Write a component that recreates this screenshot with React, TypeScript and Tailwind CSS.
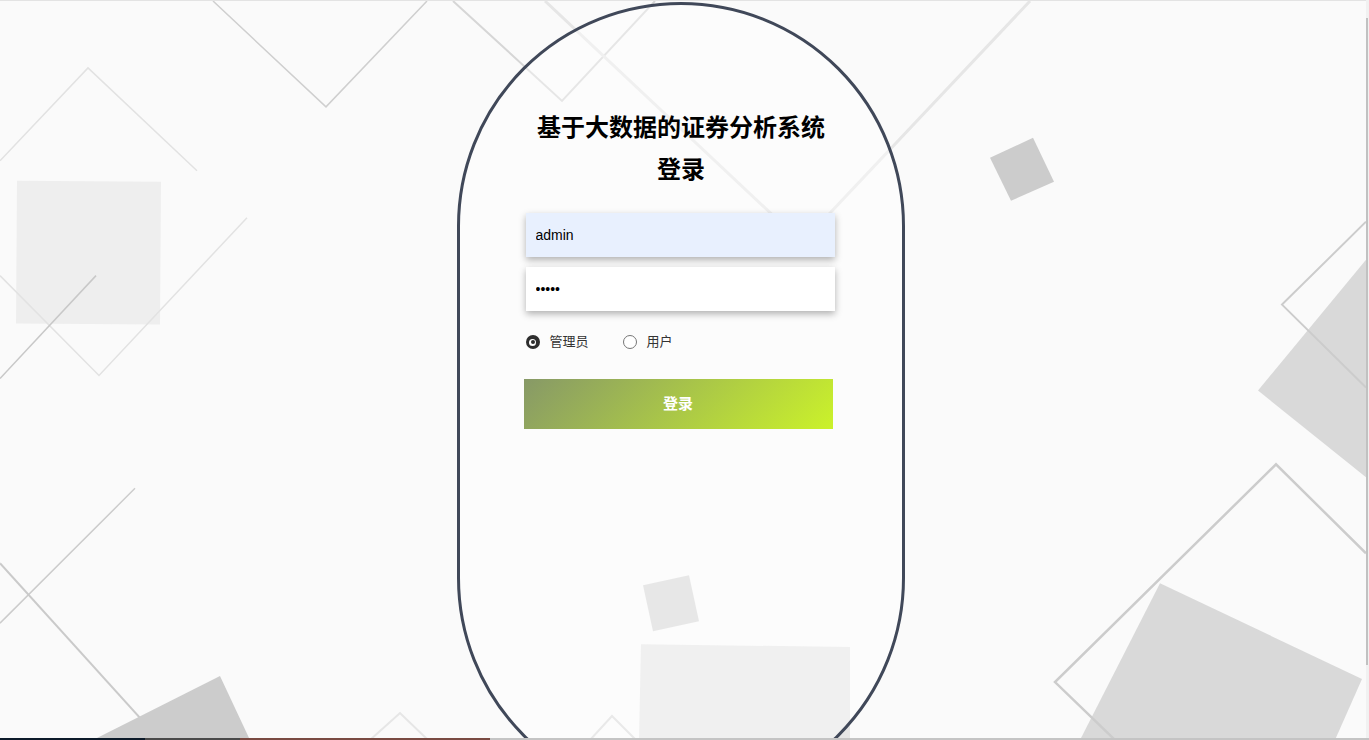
import React from 'react';

// decorative background shapes, traced from the design
function Backdrop() {
  return (
    <svg className="absolute inset-0 h-full w-full" viewBox="0 0 1366 738" preserveAspectRatio="none">
      <polygon points="17,180 161,181 160,324 16,323" fill="#eeeeee" />
      <polygon points="643,585 689,575 699,621 653,631" fill="#d8d8d8" />
      <polygon points="641,644 850,647 850,740 639,740" fill="#e6e6e6" />
      <polygon points="990,157 1033,137 1054,181 1011,200" fill="#cccccc" />
      <polygon points="1366,259 1258,390 1366,477" fill="#d9d9d9" />
      <polygon points="1160,583 1362,679 1335,740 1080,740" fill="#d9d9d9" />

      <g fill="none" strokeLinejoin="miter">
        <polyline points="213,0 326,106 427,0" stroke="#cfcfcf" strokeWidth="1.5" />
        <polyline points="453,0 562,100 655,0" stroke="#d6d6d6" strokeWidth="2" />
        <polyline points="545,0 802,242 1030,0" stroke="#e6e6e6" strokeWidth="3" />
        <polyline points="0,160 88,67 197,170" stroke="#e2e2e2" strokeWidth="1.5" />
        <polyline points="0,275 99,375 247,217" stroke="#e2e2e2" strokeWidth="1.5" />
        <line x1="0" y1="378" x2="96" y2="275" stroke="#c8c8c8" strokeWidth="1.5" />
        <line x1="135" y1="488" x2="0" y2="623" stroke="#cccccc" strokeWidth="1.5" />
        <line x1="0" y1="563" x2="160" y2="740" stroke="#cacaca" strokeWidth="2" />
        <polyline points="370,740 400,713 428,740" stroke="#e6e6e6" strokeWidth="2" />
        <polyline points="590,740 612,716 636,740" stroke="#dadada" strokeWidth="2" />
        <polyline points="1366,221 1282,304 1366,387" stroke="#cccccc" strokeWidth="2" />
        <polyline points="1115,740 1055,682 1276,464 1366,553" stroke="#cccccc" strokeWidth="2.5" />
      </g>
      <polygon points="93,740 220,676 250,740" fill="#cccccc" />
    </svg>
  );
}

function Radio({ checked, label }: { checked?: boolean; label: string }) {
  return (
    <label className="flex items-center gap-[10px] text-[13px] text-[#333]">
      {checked ? (
        <span className="flex h-[14px] w-[14px] items-center justify-center rounded-full bg-[#2e2e2e]">
          <span className="flex h-[7px] w-[7px] items-center justify-center rounded-full bg-white">
            <span className="h-[4px] w-[4px] rounded-full bg-[#2e2e2e]" />
          </span>
        </span>
      ) : (
        <span className="h-[14px] w-[14px] rounded-full border border-[#767676] bg-white" />
      )}
      <span>{label}</span>
    </label>
  );
}

export default function App() {
  return (
    <div className="flex h-[740px] w-[1369px] flex-col overflow-hidden bg-[#fafafa] font-['Liberation_Sans','Noto_Sans_CJK_SC',sans-serif]">
      <div className="flex h-[738px] shrink-0">
        <div className="relative flex-1 overflow-hidden border-t border-[#e3e3e3]">
          <Backdrop />
          <div className="relative flex justify-center pr-[4px] pt-[1px]">
            <div className="flex h-[800px] w-[448px] shrink-0 flex-col items-center rounded-full border-[3px] border-[#404859] bg-white/40 pt-[102px] pr-[4px]">
              <h1 className="ml-[4px] text-center text-[24px] font-bold leading-[42px] text-black">
                基于大数据的证券分析系统
                <br />
                登录
              </h1>

              <div className="mt-[22px] flex w-[311px] flex-col">
                <input
                  readOnly
                  defaultValue="admin"
                  className="ml-[2px] h-[44px] w-[309px] bg-[#e8f0fe] px-[10px] text-[14px] text-black shadow-[0_3px_7px_rgba(0,0,0,0.3)] outline-none"
                />
                <input
                  readOnly
                  type="password"
                  defaultValue="admin"
                  className="ml-[2px] mt-[10px] h-[44px] w-[309px] bg-white px-[10px] text-[14px] text-black shadow-[0_3px_7px_rgba(0,0,0,0.3)] outline-none"
                />

                <div className="ml-[2px] mt-[21px] flex h-[20px] items-center gap-[34px]">
                  <Radio checked label="管理员" />
                  <Radio label="用户" />
                </div>

                <button className="mt-[27px] h-[50px] w-[309px] bg-[linear-gradient(135deg,#879967,#cbf22a)] text-[15px] font-bold text-white">
                  登录
                </button>
              </div>
            </div>
          </div>
        </div>
        <div className="w-[3px] bg-[#f1f1f1] pt-[18px]">
          <div className="h-[647px] w-[2px] bg-[#c1c1c1]" />
        </div>
      </div>
      <div className="flex h-[2px] shrink-0">
        <div className="w-[145px] bg-[#0d1b2a]" />
        <div className="w-[95px] bg-[#4a4a4a]" />
        <div className="w-[250px] bg-[#7a4a42]" />
        <div className="flex-1 bg-[#c4c4c4]" />
      </div>
    </div>
  );
}
